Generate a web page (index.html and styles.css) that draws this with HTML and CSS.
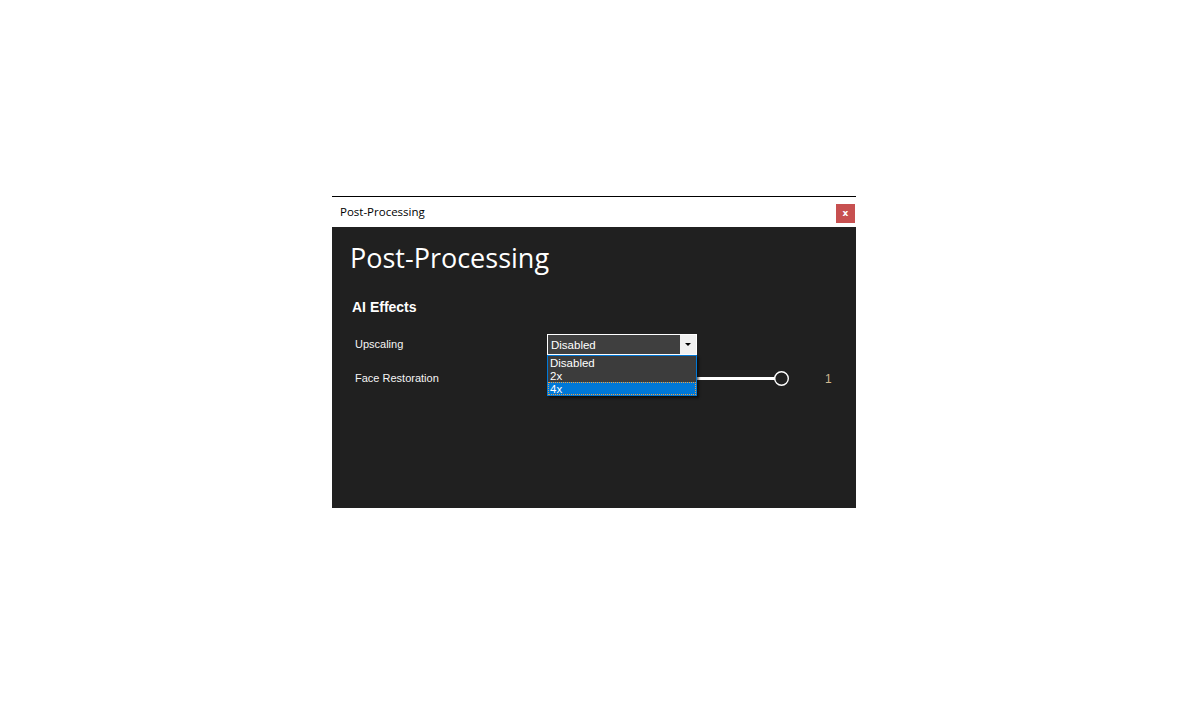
FILE: index.html
```html
<!DOCTYPE html>
<html>
<head>
<meta charset="utf-8">
<title>Post-Processing</title>
<link rel="stylesheet" href="styles.css">
</head>
<body>
<div class="stage">
  <div class="window">
    <div class="titlebar">
      <span class="title">Post-Processing</span>
      <button class="close">x</button>
    </div>
    <div class="content">
      <h1 class="heading">Post-Processing</h1>
      <h2 class="section">AI Effects</h2>
      <div class="row">
        <span class="label">Upscaling</span>
        <div class="combo">
          <span class="combo-text">Disabled</span>
          <span class="combo-arrow"><svg width="6" height="3" viewBox="0 0 6 3"><path d="M0 0H6L3 3Z" fill="#000"/></svg></span>
          <ul class="combo-list">
            <li class="item">Disabled</li>
            <li class="item">2x</li>
            <li class="item selected">4x</li>
          </ul>
        </div>
      </div>
      <div class="row">
        <span class="label">Face Restoration</span>
        <svg class="slider" width="243" height="21" viewBox="0 0 243 21">
          <rect x="0" y="9" width="228" height="3" fill="#ffffff"/>
          <circle cx="234.5" cy="10.5" r="6.8" fill="#202020" stroke="#ffffff" stroke-width="1.4"/>
        </svg>
        <span class="value">1</span>
      </div>
    </div>
  </div>
</div>
</body>
</html>
```

FILE: styles.css
```css
html, body {
  margin: 0;
  padding: 0;
  background: #ffffff;
}

.stage {
  display: flex;
  justify-content: center;
  padding-top: 196px;
  padding-left: 2px;
}

.window {
  width: 524px;
  border-top: 1px solid #000000;
  display: flex;
  flex-direction: column;
}

.titlebar {
  height: 30px;
  background: #ffffff;
  display: flex;
  align-items: flex-start;
  justify-content: space-between;
}

.title {
  font-family: "Open Sans", "Liberation Sans", sans-serif;
  font-size: 11.5px;
  line-height: 16px;
  color: #000000;
  margin-top: 7px;
  margin-left: 8px;
}

.close {
  width: 19px;
  height: 19px;
  margin-top: 7px;
  margin-right: 1px;
  padding: 0;
  border: none;
  background: #c75050;
  color: #ffffff;
  font-family: "DejaVu Sans", sans-serif;
  font-weight: bold;
  font-size: 9px;
  line-height: 19px;
  text-align: center;
}

.content {
  height: 281px;
  background: #202020;
  padding-left: 18px;
  box-sizing: border-box;
  display: flex;
  flex-direction: column;
}

.heading {
  margin: 13px 0 0 0;
  font-family: "Open Sans", "Liberation Sans", sans-serif;
  font-weight: 400;
  font-size: 27px;
  line-height: 36px;
  color: #ffffff;
}

.section {
  margin: 23px 0 0 2px;
  font-family: "Liberation Sans", Arial, sans-serif;
  font-weight: bold;
  font-size: 14px;
  line-height: 16px;
  color: #ffffff;
}

.row {
  display: flex;
  align-items: center;
  height: 21px;
  margin-top: 19px;
  padding-left: 5px;
}

.row + .row {
  margin-top: 13px;
}

.label {
  width: 192px;
  font-family: "Liberation Sans", Arial, sans-serif;
  font-size: 11px;
  line-height: 19px;
  color: #f5f5f5;
}

.combo {
  position: relative;
  width: 150px;
  height: 21px;
  box-sizing: border-box;
  border: 1px solid #ffffff;
  background: #3f3f3f;
  display: flex;
  align-items: stretch;
}

.combo-text {
  flex: 1;
  padding-left: 3px;
  font-family: "Liberation Sans", Arial, sans-serif;
  font-size: 11.5px;
  line-height: 20px;
  color: #ffffff;
}

.combo-arrow {
  width: 16px;
  background: #f0f0f0;
  display: flex;
  align-items: center;
  justify-content: center;
}

.combo-list {
  position: absolute;
  left: -1px;
  top: 20px;
  width: 150px;
  margin: 0;
  padding: 0;
  list-style: none;
  box-sizing: border-box;
  border: 1px solid #0078d7;
  background: #3c3c3c;
  box-shadow: 2px 2px 2px rgba(0, 0, 0, 0.55);
  z-index: 2;
}

.item {
  height: 13px;
  padding-left: 2px;
  font-family: "Liberation Sans", Arial, sans-serif;
  font-size: 11.5px;
  line-height: 14px;
  color: #ffffff;
  box-sizing: border-box;
}

.item.selected {
  background: #0078d7;
  outline: 1px dotted #f0a040;
  outline-offset: -1px;
}

.slider {
  display: block;
}

.value {
  margin-left: 35px;
  font-family: "Liberation Sans", Arial, sans-serif;
  font-size: 12px;
  color: #d0b890;
}
```
